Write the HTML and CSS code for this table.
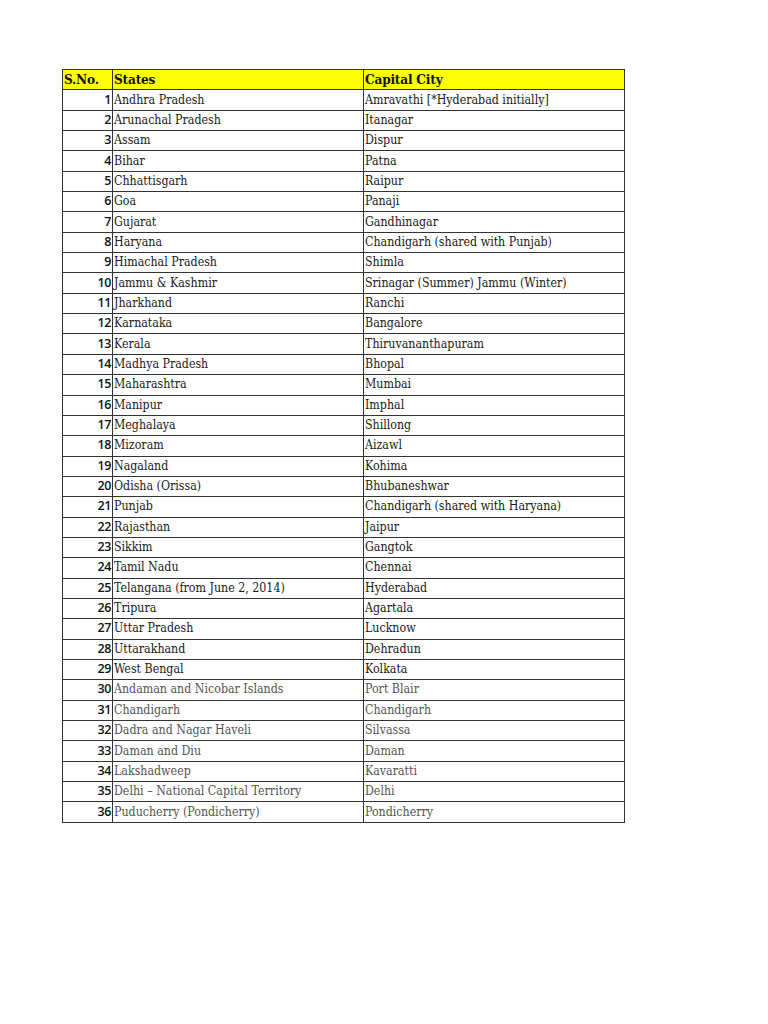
FILE: index.html
```html
<!DOCTYPE html>
<html>
<head>
<meta charset="utf-8">
<link rel="stylesheet" href="styles.css">
</head>
<body>
<div class="page">
<table class="grid">
<colgroup><col class="c-num"><col class="c-state"><col class="c-cap"></colgroup>
<thead>
<tr><th class="h-num">S.No.</th><th>States</th><th>Capital City</th></tr>
</thead>
<tbody>
<tr><td class="n">1</td><td>Andhra Pradesh</td><td>Amravathi [*Hyderabad initially]</td></tr>
<tr><td class="n">2</td><td>Arunachal Pradesh</td><td>Itanagar</td></tr>
<tr><td class="n">3</td><td>Assam</td><td>Dispur</td></tr>
<tr><td class="n">4</td><td>Bihar</td><td>Patna</td></tr>
<tr><td class="n">5</td><td>Chhattisgarh</td><td>Raipur</td></tr>
<tr><td class="n">6</td><td>Goa</td><td>Panaji</td></tr>
<tr><td class="n">7</td><td>Gujarat</td><td>Gandhinagar</td></tr>
<tr><td class="n">8</td><td>Haryana</td><td>Chandigarh (shared with Punjab)</td></tr>
<tr><td class="n">9</td><td>Himachal Pradesh</td><td>Shimla</td></tr>
<tr><td class="n">10</td><td>Jammu &amp; Kashmir</td><td>Srinagar (Summer) Jammu (Winter)</td></tr>
<tr><td class="n">11</td><td>Jharkhand</td><td>Ranchi</td></tr>
<tr><td class="n">12</td><td>Karnataka</td><td>Bangalore</td></tr>
<tr><td class="n">13</td><td>Kerala</td><td>Thiruvananthapuram</td></tr>
<tr><td class="n">14</td><td>Madhya Pradesh</td><td>Bhopal</td></tr>
<tr><td class="n">15</td><td>Maharashtra</td><td>Mumbai</td></tr>
<tr><td class="n">16</td><td>Manipur</td><td>Imphal</td></tr>
<tr><td class="n">17</td><td>Meghalaya</td><td>Shillong</td></tr>
<tr><td class="n">18</td><td>Mizoram</td><td>Aizawl</td></tr>
<tr><td class="n">19</td><td>Nagaland</td><td>Kohima</td></tr>
<tr><td class="n">20</td><td>Odisha (Orissa)</td><td>Bhubaneshwar</td></tr>
<tr><td class="n">21</td><td>Punjab</td><td>Chandigarh (shared with Haryana)</td></tr>
<tr><td class="n">22</td><td>Rajasthan</td><td>Jaipur</td></tr>
<tr><td class="n">23</td><td>Sikkim</td><td>Gangtok</td></tr>
<tr><td class="n">24</td><td>Tamil Nadu</td><td>Chennai</td></tr>
<tr><td class="n">25</td><td>Telangana (from June 2, 2014)</td><td>Hyderabad</td></tr>
<tr><td class="n">26</td><td>Tripura</td><td>Agartala</td></tr>
<tr><td class="n">27</td><td>Uttar Pradesh</td><td>Lucknow</td></tr>
<tr><td class="n">28</td><td>Uttarakhand</td><td>Dehradun</td></tr>
<tr><td class="n">29</td><td>West Bengal</td><td>Kolkata</td></tr>
<tr class="ut"><td class="n">30</td><td>Andaman and Nicobar Islands</td><td>Port Blair</td></tr>
<tr class="ut"><td class="n">31</td><td>Chandigarh</td><td>Chandigarh</td></tr>
<tr class="ut"><td class="n">32</td><td>Dadra and Nagar Haveli</td><td>Silvassa</td></tr>
<tr class="ut"><td class="n">33</td><td>Daman and Diu</td><td>Daman</td></tr>
<tr class="ut"><td class="n">34</td><td>Lakshadweep</td><td>Kavaratti</td></tr>
<tr class="ut"><td class="n">35</td><td>Delhi – National Capital Territory</td><td>Delhi</td></tr>
<tr class="ut"><td class="n">36</td><td>Puducherry (Pondicherry)</td><td>Pondicherry</td></tr>
</tbody>
</table>
</div>
</body>
</html>
```

FILE: styles.css
```css
html, body {
  margin: 0;
  padding: 0;
  background: #ffffff;
}

.page {
  padding: 69px 0 0 62px;
}

.grid {
  border-collapse: collapse;
  table-layout: fixed;
  width: 562px;
  font-family: "DejaVu Serif Condensed", "DejaVu Serif", serif;
  font-stretch: condensed;
  font-size: 12.3px;
  color: #1a1a1a;
}

.c-num { width: 50px; }
.c-state { width: 251px; }
.c-cap { width: 261px; }

.grid th,
.grid td {
  border: 1px solid #333333;
  height: 18.35px;
  padding: 0 0 1px 1px;
  line-height: 14px;
  white-space: nowrap;
  overflow: hidden;
  text-align: left;
  vertical-align: middle;
}

.grid th {
  background: #ffff00;
  font-weight: bold;
  font-size: 13.5px;
  letter-spacing: -0.2px;
  color: #111;
}

.grid td.n {
  text-align: right;
  padding: 0 1px 1px 0;
  font-family: "Open Sans", "Liberation Sans", sans-serif;
  font-stretch: normal;
  font-weight: 600;
  font-size: 12.5px;
  letter-spacing: -0.4px;
  color: #111;
}

.grid tr.ut td {
  color: #555555;
}

.grid tr.ut td.n {
  color: #111;
}
```
